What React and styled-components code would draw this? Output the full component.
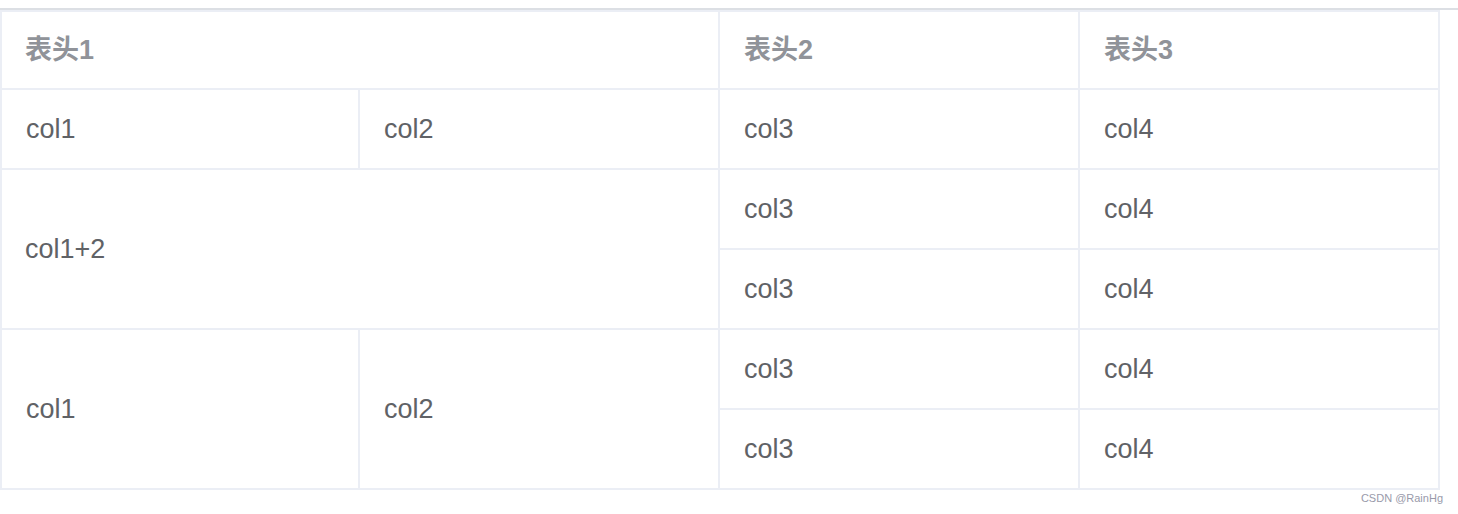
import styled, { createGlobalStyle } from "styled-components";

const GlobalStyle = createGlobalStyle`
  html, body {
    margin: 0;
    padding: 0;
    background: #ffffff;
  }
  body {
    font-family: "Liberation Sans", "Noto Sans CJK SC", sans-serif;
  }
`;

const Page = styled.div`
  width: 1458px;
  padding-top: 8px;
`;

const TopRule = styled.div`
  height: 2px;
  background: #dcdfe4;
`;

const Table = styled.table`
  width: 1440px;
  table-layout: fixed;
  border-collapse: separate;
  border-spacing: 0;
  border-top: 2px solid #ebeef5;
  border-left: 2px solid #ebeef5;
  font-family: "Liberation Sans", "Noto Sans CJK SC", sans-serif;
  font-size: 27px;
`;

const Cell = styled.td`
  box-sizing: border-box;
  height: ${p => (p.head ? 78 : 80)}px;
  padding: 0 0 ${p => (p.head ? 6 : 0)}px ${p => p.pad || 24}px;
  border-right: 2px solid #ebeef5;
  border-bottom: 2px solid #ebeef5;
  color: ${p => (p.head ? "#909399" : "#606266")};
  font-weight: ${p => (p.head ? 700 : 400)};
  text-align: left;
  vertical-align: middle;
  white-space: nowrap;
`;

const Watermark = styled.div`
  width: 1443px;
  padding-top: 2px;
  text-align: right;
  font-family: "Liberation Sans", sans-serif;
  font-size: 11px;
  line-height: 13px;
  color: #999aaa;
`;

const App = () => {
  return (
    <>
      <GlobalStyle />
      <Page>
        <TopRule />
        <Table>
          <colgroup>
            <col style={{ width: "358px" }} />
            <col style={{ width: "360px" }} />
            <col style={{ width: "360px" }} />
            <col style={{ width: "360px" }} />
          </colgroup>
          <thead>
            <tr>
              <Cell as="th" head colSpan={2} pad={23}>表头1</Cell>
              <Cell as="th" head>表头2</Cell>
              <Cell as="th" head>表头3</Cell>
            </tr>
          </thead>
          <tbody>
            <tr>
              <Cell>col1</Cell>
              <Cell>col2</Cell>
              <Cell>col3</Cell>
              <Cell>col4</Cell>
            </tr>
            <tr>
              <Cell colSpan={2} rowSpan={2} pad={23}>col1+2</Cell>
              <Cell>col3</Cell>
              <Cell>col4</Cell>
            </tr>
            <tr>
              <Cell>col3</Cell>
              <Cell>col4</Cell>
            </tr>
            <tr>
              <Cell rowSpan={2}>col1</Cell>
              <Cell rowSpan={2}>col2</Cell>
              <Cell>col3</Cell>
              <Cell>col4</Cell>
            </tr>
            <tr>
              <Cell>col3</Cell>
              <Cell>col4</Cell>
            </tr>
          </tbody>
        </Table>
        <Watermark>CSDN @RainHg</Watermark>
      </Page>
    </>
  );
};

export default App;
